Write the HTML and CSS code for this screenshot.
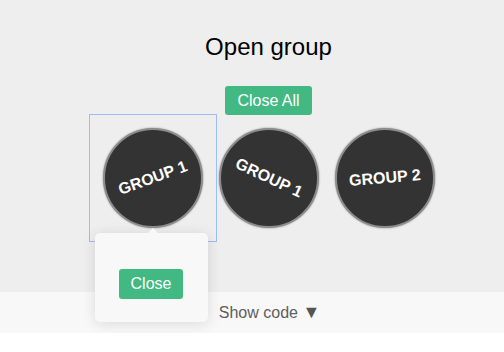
FILE: index.html
```html
<!DOCTYPE html>
<html lang="en">
<head>
    <meta charset="UTF-8">
    <meta name="viewport" content="width=device-width, initial-scale=1.0">
    <title>Open group</title>
    <link rel="stylesheet" href="styles.css">
</head>
<body>
    <div class="demo">
        <h2>Open group</h2>
        <button class="btn">Close All</button>

        <div class="groups">
            <div class="group selected">
                <div class="circle"><span class="label tilt-left">GROUP 1</span></div>
                <div class="popover">
                    <button class="btn">Close</button>
                </div>
            </div>
            <div class="group">
                <div class="circle"><span class="label tilt-right">GROUP 1</span></div>
            </div>
            <div class="group">
                <div class="circle"><span class="label tilt-slight">GROUP 2</span></div>
            </div>
        </div>
    </div>

    <div class="show-code">Show code <span class="arrow">▼</span></div>
</body>
</html>
```

FILE: styles.css
```css
body {
    margin: 0;
    padding: 0;
    font-family: 'Liberation Sans', Arial, sans-serif;
    background: #fff;
}

.demo {
    background: #eee;
    height: 292px;
    box-sizing: border-box;
    padding: 33px 0 0 33px;
    display: flex;
    flex-direction: column;
    align-items: center;
}

h2 {
    margin: 0;
    font-size: 24px;
    font-weight: normal;
    line-height: 28px;
    color: #000;
}

.btn {
    background: #42b983;
    border: none;
    border-radius: 3px;
    color: #fff;
    font-family: inherit;
    font-size: 16px;
    line-height: 19px;
    padding: 5px 12px;
    cursor: pointer;
}

.demo > .btn {
    margin-top: 25px;
}

.groups {
    display: flex;
    gap: 16px;
    margin-top: 13px;
}

.group {
    position: relative;
}

.group.selected {
    outline: 1px solid #9ebcf6;
    outline-offset: 13px;
}

.circle {
    width: 100px;
    height: 100px;
    box-sizing: border-box;
    border-radius: 50%;
    background: #333;
    border: 2px solid #8c8c8c;
    box-shadow: 0 0 2px rgba(0, 0, 0, 0.45);
    display: flex;
    justify-content: center;
    align-items: center;
}

.label {
    color: #fff;
    font-weight: bold;
    font-size: 16px;
    white-space: nowrap;
}

.tilt-left { transform: rotate(-20deg); }
.tilt-right { transform: rotate(25deg); }
.tilt-slight { transform: rotate(-5deg); }

.popover {
    position: absolute;
    top: 105px;
    left: -8px;
    width: 113px;
    height: 89px;
    box-sizing: border-box;
    padding-top: 36px;
    background: #f8f8f8;
    border-radius: 5px;
    box-shadow: 0 2px 14px rgba(0, 0, 0, 0.12);
    text-align: center;
    z-index: 2;
}

.popover .btn {
    line-height: 20px;
    padding: 5px 12px;
}

.popover::before {
    content: '';
    position: absolute;
    top: -5px;
    left: 53px;
    border-left: 5px solid transparent;
    border-right: 5px solid transparent;
    border-bottom: 5px solid #f8f8f8;
}

.show-code {
    background: #f8f8f8;
    height: 41px;
    line-height: 41px;
    padding-left: 35px;
    text-align: center;
    color: #5e5e5e;
    font-size: 16px;
}

.arrow {
    font-size: 18px;
    color: #555;
}
```
